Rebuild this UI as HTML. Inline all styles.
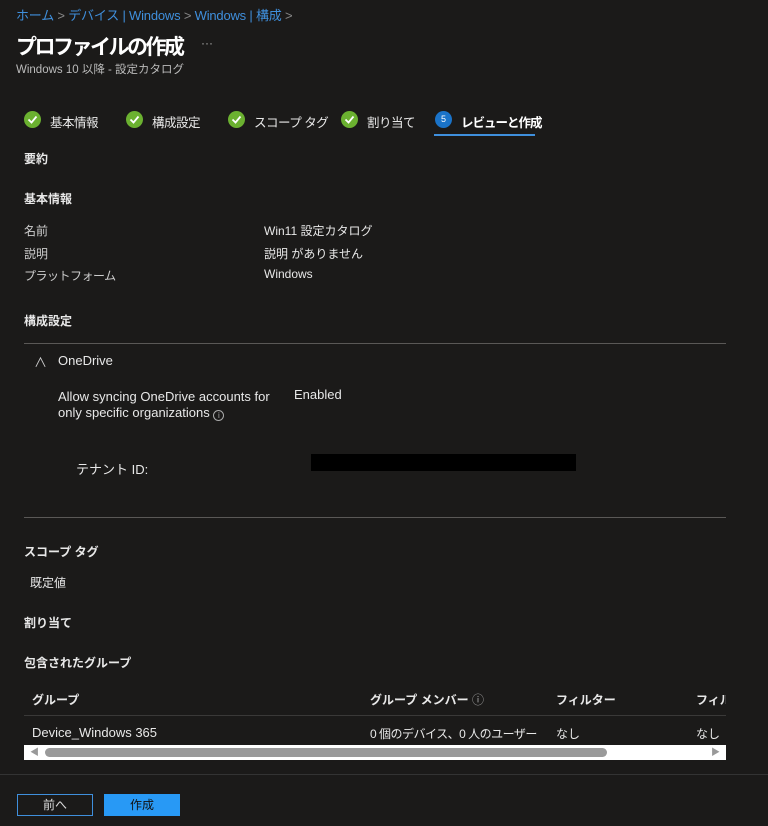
<!DOCTYPE html>
<html><head><meta charset="utf-8"><style>
*{margin:0;padding:0;box-sizing:border-box}
body{width:768px;height:826px;background:#1b1a19;color:#e8e8e8;font-family:"Liberation Sans","Noto Sans CJK JP",sans-serif;font-size:12px;position:relative;overflow:hidden}
.a{position:absolute;white-space:nowrap}
.b{font-weight:bold}
.ck{position:absolute;width:17px;height:17px;border-radius:50%;background:#6bb130}
.ck svg{position:absolute;left:3px;top:3px}
.hr{position:absolute;height:1px;background:#5a5856}
.st{font-size:12.5px;letter-spacing:-0.5px}
</style></head><body>
<div class="a" style="left:16px;top:5px;color:#3f8fdc;font-size:13px;letter-spacing:-0.2px">ホーム <span style="color:#888">&gt;</span> デバイス | Windows <span style="color:#888">&gt;</span> Windows | 構成 <span style="color:#888">&gt;</span></div>
<div class="a b" style="left:16px;top:31px;font-size:21px;color:#fff;letter-spacing:-2.5px">プロファイルの作成</div>
<div class="a" style="left:201px;top:36px;color:#aaa">···</div>
<div class="a" style="left:16px;top:61px;color:#bbb;font-size:11.5px">Windows 10 以降 - 設定カタログ</div>

<div class="ck" style="left:24px;top:111px"><svg width="11" height="11"><path d="M1.5 5.5l3 3 5-6" stroke="#fff" stroke-width="1.8" fill="none"/></svg></div>
<div class="a st" style="left:50px;top:112px">基本情報</div>
<div class="ck" style="left:126px;top:111px"><svg width="11" height="11"><path d="M1.5 5.5l3 3 5-6" stroke="#fff" stroke-width="1.8" fill="none"/></svg></div>
<div class="a st" style="left:152px;top:112px">構成設定</div>
<div class="ck" style="left:228px;top:111px"><svg width="11" height="11"><path d="M1.5 5.5l3 3 5-6" stroke="#fff" stroke-width="1.8" fill="none"/></svg></div>
<div class="a st" style="left:254px;top:112px">スコープ タグ</div>
<div class="ck" style="left:341px;top:111px"><svg width="11" height="11"><path d="M1.5 5.5l3 3 5-6" stroke="#fff" stroke-width="1.8" fill="none"/></svg></div>
<div class="a st" style="left:367px;top:112px">割り当て</div>
<div class="a" style="left:435px;top:111px;width:17px;height:17px;border-radius:50%;background:#1a73c8;color:#fff;font-size:9px;text-align:center;line-height:17px">5</div>
<div class="a b st" style="left:461px;top:112px;color:#fff;letter-spacing:-1px">レビューと作成</div>
<div class="a" style="left:434px;top:134px;width:101px;height:2px;background:#3f8fdc"></div>

<div class="a b" style="left:24px;top:150px">要約</div>
<div class="a b" style="left:24px;top:190px">基本情報</div>
<div class="a" style="left:24px;top:222px;color:#ccc">名前</div>
<div class="a" style="left:264px;top:222px">Win11 設定カタログ</div>
<div class="a" style="left:24px;top:245px;color:#ccc">説明</div>
<div class="a" style="left:264px;top:245px">説明 がありません</div>
<div class="a" style="left:24px;top:267px;color:#ccc;letter-spacing:-0.5px">プラットフォーム</div>
<div class="a" style="left:264px;top:267px">Windows</div>
<div class="a b" style="left:24px;top:312px">構成設定</div>
<div class="hr" style="left:24px;top:343px;width:702px"></div>
<div class="a" style="left:34px;top:352px;font-size:13px;color:#ccc">∧</div>
<div class="a" style="left:58px;top:353px;font-size:13px">OneDrive</div>
<div class="a" style="left:58px;top:389px;font-size:13px;line-height:16px">Allow syncing OneDrive accounts for<br>only specific organizations <span style="display:inline-block;width:11px;height:11px;border:1px solid #aaa;border-radius:50%;font-size:8px;text-align:center;line-height:9px;color:#aaa;vertical-align:-1px">i</span></div>
<div class="a" style="left:294px;top:387px;font-size:13px">Enabled</div>
<div class="a" style="left:76px;top:459px;font-size:13px">テナント ID:</div>
<div class="a" style="left:311px;top:454px;width:265px;height:17px;background:#000"></div>
<div class="hr" style="left:24px;top:517px;width:702px"></div>

<div class="a b" style="left:24px;top:543px">スコープ タグ</div>
<div class="a" style="left:30px;top:574px">既定値</div>
<div class="a b" style="left:24px;top:614px">割り当て</div>
<div class="a b" style="left:24px;top:654px">包含されたグループ</div>
<div class="a b" style="left:32px;top:691px">グループ</div>
<div class="a b" style="left:370px;top:691px">グループ メンバー <span style="font-weight:normal;color:#aaa">ⓘ</span></div>
<div class="a b" style="left:556px;top:691px">フィルター</div>
<div class="a b" style="left:696px;top:691px;width:30px;overflow:hidden">フィルター</div>
<div class="hr" style="left:24px;top:715px;width:702px;background:#3a3938"></div>
<div class="a" style="left:32px;top:725px;font-size:13px">Device_Windows 365</div>
<div class="a" style="left:370px;top:725px;letter-spacing:-0.5px">0 個のデバイス、0 人のユーザー</div>
<div class="a" style="left:556px;top:725px">なし</div>
<div class="a" style="left:696px;top:725px">なし</div>
<div class="a" style="left:24px;top:745px;width:702px;height:15px;background:#fff"></div>
<div class="a" style="left:45px;top:748px;width:562px;height:9px;border-radius:5px;background:#9a9a9a"></div>
<div class="a" style="left:30px;top:745px;color:#999;font-size:9px">◀</div>
<div class="a" style="left:711px;top:745px;color:#999;font-size:9px">▶</div>
<div class="hr" style="left:0;top:774px;width:768px;background:#333"></div>
<div class="a" style="left:17px;top:794px;width:76px;height:22px;border:1px solid #3f8fdc;background:#1b1a19;color:#ddd;text-align:center;line-height:20px">前へ</div>
<div class="a" style="left:104px;top:794px;width:76px;height:22px;background:#2899f5;color:#111;text-align:center;line-height:22px">作成</div>
</body></html>
